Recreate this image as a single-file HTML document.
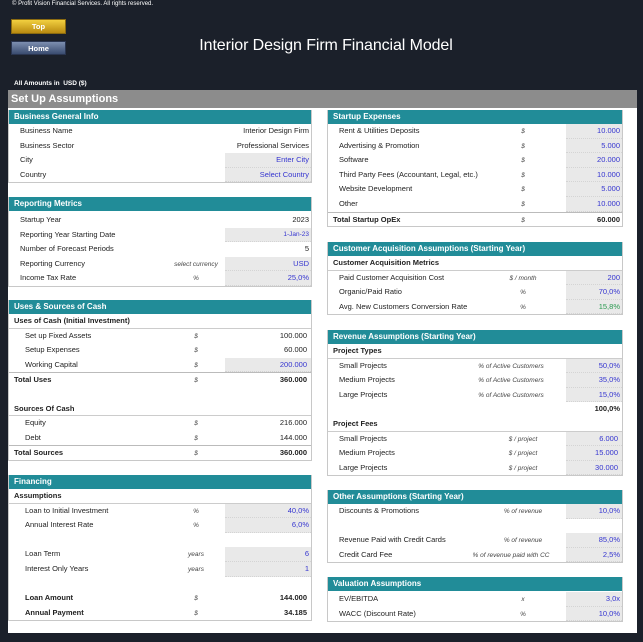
<!DOCTYPE html>
<html><head><meta charset="utf-8"><style>
*{margin:0;padding:0;box-sizing:border-box}
body{width:643px;height:642px;background:#1b202a;font-family:"Liberation Sans",sans-serif;position:relative;overflow:hidden;color:#222}
.abs{position:absolute}
.white{position:absolute;left:8px;top:108px;width:629px;height:525px;background:#fff}
.gbar{position:absolute;left:8px;top:90px;width:629px;height:18px;background:#8c8c8c;color:#fff;font-weight:bold;font-size:11px;line-height:18px;padding-left:3px}
.p{position:absolute;border:1px solid #c8c8c8;border-top:none;background:#fff}
.h{height:14px;background:#218c98;color:#fff;font-weight:bold;font-size:8px;line-height:14px;padding-left:5px}
.r{position:relative;height:14.6px;line-height:14.6px;font-size:7.5px}
.l{position:absolute;left:11px;white-space:nowrap}
.l2{left:16px}
.b{font-weight:bold}
.sh .l{left:5px}
.sh{border-bottom:1px solid #ccc}
.tot{border-top:1px solid #bbb}
.tot .l{left:5px}
.u{position:absolute;top:0;line-height:normal;padding-top:4px;transform:translateX(-50%);font-style:italic;font-size:6.5px;font-weight:normal;color:#444;white-space:nowrap}
.v{position:absolute;right:0;text-align:right;padding-right:2px;height:14.6px;white-space:nowrap}
.in{background:#e9e9e9;color:#3535d0;border-bottom:1px dotted #d4d4d4}
.L .v{width:86px}
.R .v{width:56px}
.L .u{left:187px}
.R .u{left:195px}
</style></head><body>
<div class="abs" style="left:12px;top:1px;font-size:6px;color:#fff">© Profit Vision Financial Services. All rights reserved.</div>
<div class="abs" style="left:11px;top:19px;width:55px;height:15px;background:linear-gradient(#f2d040,#b98a10);border:1px solid #8a6a10;color:#fff;font-size:7.5px;text-align:center;line-height:14px;font-weight:bold">Top</div>
<div class="abs" style="left:11px;top:41px;width:55px;height:14px;background:linear-gradient(#7d8fb0,#3a4c70);border:1px solid #2a3550;color:#fff;font-size:7.5px;text-align:center;line-height:13px;font-weight:bold">Home</div>
<div class="abs" style="left:0;width:652px;top:37px;text-align:center;color:#fff;font-size:16px;letter-spacing:-0.1px">Interior Design Firm Financial Model</div>
<div class="abs" style="left:14px;top:80px;font-size:6.5px;color:#fff;font-weight:bold">All Amounts in &nbsp;USD ($)</div>
<div class="white"></div>
<div class="gbar">Set Up Assumptions</div>

<!-- LEFT -->
<div class="p L" style="left:8px;top:110px;width:304px">
<div class="h">Business General Info</div>
<div class="r"><span class="l">Business Name</span><span class="v">Interior Design Firm</span></div>
<div class="r"><span class="l">Business Sector</span><span class="v">Professional Services</span></div>
<div class="r"><span class="l">City</span><span class="v in">Enter City</span></div>
<div class="r"><span class="l">Country</span><span class="v in">Select Country</span></div>
</div>

<div class="p L" style="left:8px;top:197px;width:304px">
<div class="h">Reporting Metrics</div>
<div class="r" style="margin-top:2px"><span class="l">Startup Year</span><span class="v">2023</span></div>
<div class="r"><span class="l">Reporting Year Starting Date</span><span class="v in" style="font-size:6.5px">1-Jan-23</span></div>
<div class="r"><span class="l">Number of Forecast Periods</span><span class="v">5</span></div>
<div class="r"><span class="l">Reporting Currency</span><span class="u">select currency</span><span class="v in">USD</span></div>
<div class="r"><span class="l">Income Tax Rate</span><span class="u">%</span><span class="v in">25,0%</span></div>
</div>

<div class="p L" style="left:8px;top:300px;width:304px">
<div class="h">Uses &amp; Sources of Cash</div>
<div class="r sh b"><span class="l">Uses of Cash (Initial Investment)</span></div>
<div class="r"><span class="l l2">Set up Fixed Assets</span><span class="u">$</span><span class="v" style="padding-right:4px">100.000</span></div>
<div class="r"><span class="l l2">Setup Expenses</span><span class="u">$</span><span class="v" style="padding-right:4px">60.000</span></div>
<div class="r"><span class="l l2">Working Capital</span><span class="u">$</span><span class="v in" style="padding-right:4px">200.000</span></div>
<div class="r tot b"><span class="l">Total Uses</span><span class="u">$</span><span class="v" style="padding-right:4px">360.000</span></div>
<div class="r"></div>
<div class="r sh b"><span class="l">Sources Of Cash</span></div>
<div class="r"><span class="l l2">Equity</span><span class="u">$</span><span class="v" style="padding-right:4px">216.000</span></div>
<div class="r"><span class="l l2">Debt</span><span class="u">$</span><span class="v" style="padding-right:4px">144.000</span></div>
<div class="r tot b"><span class="l">Total Sources</span><span class="u">$</span><span class="v" style="padding-right:4px">360.000</span></div>
</div>

<div class="p L" style="left:8px;top:475px;width:304px">
<div class="h">Financing</div>
<div class="r sh b"><span class="l">Assumptions</span></div>
<div class="r"><span class="l l2">Loan to Initial Investment</span><span class="u">%</span><span class="v in">40,0%</span></div>
<div class="r"><span class="l l2">Annual Interest Rate</span><span class="u">%</span><span class="v in">6,0%</span></div>
<div class="r"></div>
<div class="r"><span class="l l2">Loan Term</span><span class="u">years</span><span class="v in">6</span></div>
<div class="r"><span class="l l2">Interest Only Years</span><span class="u">years</span><span class="v in">1</span></div>
<div class="r"></div>
<div class="r b"><span class="l l2">Loan Amount</span><span class="u">$</span><span class="v" style="padding-right:4px">144.000</span></div>
<div class="r b"><span class="l l2">Annual Payment</span><span class="u">$</span><span class="v" style="padding-right:4px">34.185</span></div>
</div>

<!-- RIGHT -->
<div class="p R" style="left:327px;top:110px;width:296px">
<div class="h">Startup Expenses</div>
<div class="r"><span class="l">Rent &amp; Utilities Deposits</span><span class="u">$</span><span class="v in">10.000</span></div>
<div class="r"><span class="l">Advertising &amp; Promotion</span><span class="u">$</span><span class="v in">5.000</span></div>
<div class="r"><span class="l">Software</span><span class="u">$</span><span class="v in">20.000</span></div>
<div class="r"><span class="l">Third Party Fees (Accountant, Legal, etc.)</span><span class="u">$</span><span class="v in">10.000</span></div>
<div class="r"><span class="l">Website Development</span><span class="u">$</span><span class="v in">5.000</span></div>
<div class="r"><span class="l">Other</span><span class="u">$</span><span class="v in">10.000</span></div>
<div class="r tot b"><span class="l">Total Startup OpEx</span><span class="u">$</span><span class="v">60.000</span></div>
</div>

<div class="p R" style="left:327px;top:242px;width:296px">
<div class="h">Customer Acquisition Assumptions (Starting Year)</div>
<div class="r sh b"><span class="l">Customer Acquisition Metrics</span></div>
<div class="r"><span class="l">Paid Customer Acquisition Cost</span><span class="u">$ / month</span><span class="v in">200</span></div>
<div class="r"><span class="l">Organic/Paid Ratio</span><span class="u">%</span><span class="v in">70,0%</span></div>
<div class="r"><span class="l">Avg. New Customers Conversion Rate</span><span class="u">%</span><span class="v in" style="color:#2a9a50">15,8%</span></div>
</div>

<div class="p R" style="left:327px;top:330px;width:296px">
<div class="h">Revenue Assumptions (Starting Year)</div>
<div class="r sh b"><span class="l">Project Types</span></div>
<div class="r"><span class="l">Small Projects</span><span class="u" style="left:183px">% of Active Customers</span><span class="v in">50,0%</span></div>
<div class="r"><span class="l">Medium Projects</span><span class="u" style="left:183px">% of Active Customers</span><span class="v in">35,0%</span></div>
<div class="r"><span class="l">Large Projects</span><span class="u" style="left:183px">% of Active Customers</span><span class="v in">15,0%</span></div>
<div class="r b"><span class="v">100,0%</span></div>
<div class="r sh b"><span class="l">Project Fees</span></div>
<div class="r"><span class="l">Small Projects</span><span class="u">$ / project</span><span class="v in" style="padding-right:4px">6.000</span></div>
<div class="r"><span class="l">Medium Projects</span><span class="u">$ / project</span><span class="v in" style="padding-right:4px">15.000</span></div>
<div class="r"><span class="l">Large Projects</span><span class="u">$ / project</span><span class="v in" style="padding-right:4px">30.000</span></div>
</div>

<div class="p R" style="left:327px;top:490px;width:296px">
<div class="h">Other Assumptions (Starting Year)</div>
<div class="r"><span class="l">Discounts &amp; Promotions</span><span class="u">% of revenue</span><span class="v in">10,0%</span></div>
<div class="r"></div>
<div class="r"><span class="l">Revenue Paid with Credit Cards</span><span class="u">% of revenue</span><span class="v in">85,0%</span></div>
<div class="r"><span class="l">Credit Card Fee</span><span class="u" style="left:183px">% of revenue paid with CC</span><span class="v in">2,5%</span></div>
</div>

<div class="p R" style="left:327px;top:577px;width:296px">
<div class="h">Valuation Assumptions</div>
<div class="r" style="margin-top:1px"><span class="l">EV/EBITDA</span><span class="u">x</span><span class="v in">3,0x</span></div>
<div class="r"><span class="l">WACC (Discount Rate)</span><span class="u">%</span><span class="v in">10,0%</span></div>
</div>
</body></html>
